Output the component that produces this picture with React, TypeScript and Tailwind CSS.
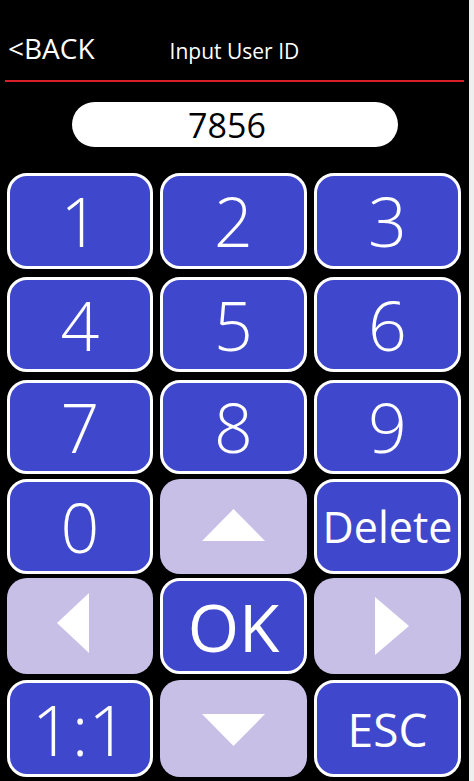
import type { ReactNode } from "react";

const font = { fontFamily: '"Open Sans", "Noto Sans", sans-serif' };

type Key = {
  label?: string;
  size?: string;
  arrow?: "up" | "down" | "left" | "right";
};

const rows: { h: string; mt: string; keys: Key[] }[] = [
  { h: "h-[96px]", mt: "mt-0", keys: [{ label: "1" }, { label: "2" }, { label: "3" }] },
  { h: "h-[95px]", mt: "mt-[8px]", keys: [{ label: "4" }, { label: "5" }, { label: "6" }] },
  { h: "h-[94px]", mt: "mt-[8px]", keys: [{ label: "7" }, { label: "8" }, { label: "9" }] },
  {
    h: "h-[95px]",
    mt: "mt-[5px]",
    keys: [{ label: "0" }, { arrow: "up" }, { label: "Delete", size: "text-[43px] font-normal" }],
  },
  {
    h: "h-[96px]",
    mt: "mt-[4px]",
    keys: [{ arrow: "left" }, { label: "OK", size: "text-[66px] font-normal" }, { arrow: "right" }],
  },
  {
    h: "h-[97px]",
    mt: "mt-[6px]",
    keys: [
      { label: "1:1", size: "text-[70px] font-[350]" },
      { arrow: "down" },
      { label: "ESC", size: "text-[46px] font-normal" },
    ],
  },
];

const Arrow = ({ dir }: { dir: "up" | "down" | "left" | "right" }) => {
  if (dir === "up")
    return (
      <svg width="63" height="32" viewBox="0 0 63 32" className="-mt-[4px]">
        <polygon points="0,32 31.5,0 63,32" fill="#fff" />
      </svg>
    );
  if (dir === "down")
    return (
      <svg width="63" height="32" viewBox="0 0 63 32" className="mt-[2px]">
        <polygon points="0,0 31.5,32 63,0" fill="#fff" />
      </svg>
    );
  if (dir === "left")
    return (
      <svg width="32" height="60" viewBox="0 0 32 60" className="-ml-[14px] -mt-[6px]">
        <polygon points="32,0 0,30 32,60" fill="#fff" />
      </svg>
    );
  return (
    <svg width="34" height="58" viewBox="0 0 34 58" className="ml-[8px]">
      <polygon points="0,0 34,29 0,58" fill="#fff" />
    </svg>
  );
};

const KeyButton = ({ k }: { k: Key }) => {
  let inner: ReactNode;
  if (k.arrow) {
    return (
      <div className="flex items-center justify-center rounded-[20px] bg-[#c8bfe7]">
        <Arrow dir={k.arrow} />
      </div>
    );
  }
  inner = (
    <span className={`leading-none text-white ${k.size ?? "text-[68px] font-[350]"}`}>{k.label}</span>
  );
  return (
    <div className="flex items-center justify-center rounded-[20px] border-[3px] border-white bg-[#3f48cc]">
      {inner}
    </div>
  );
};

export default function App() {
  return (
    <div className="flex h-[781px] w-[474px] overflow-hidden" style={font}>
      <div className="w-[469px] shrink-0 bg-black">
        {/* header */}
        <div className="flex h-[80px] items-baseline pl-[8px] pt-[34px] text-white">
          <span className="text-[28px] leading-none">&lt;BACK</span>
          <span className="ml-[75px] text-[21px] leading-none">Input User ID</span>
        </div>
        <div className="mx-[5px] h-[2px] bg-[#d7202a]" />

        {/* entry field */}
        <div className="ml-[72px] mt-[20px] flex h-[45px] w-[326px] items-center justify-center rounded-full bg-white pr-[16px]">
          <span className="text-[34px] leading-none text-black">7856</span>
        </div>

        {/* keypad */}
        <div className="mt-[26px] flex flex-col pl-[7px]">
          {rows.map((row, i) => (
            <div
              key={i}
              className={`grid grid-cols-[146px_147px_147px] gap-x-[7px] ${row.h} ${row.mt}`}
            >
              {row.keys.map((k, j) => (
                <KeyButton key={j} k={k} />
              ))}
            </div>
          ))}
        </div>
      </div>
      <div className="flex-1 bg-[#eeeeee]" />
    </div>
  );
}
